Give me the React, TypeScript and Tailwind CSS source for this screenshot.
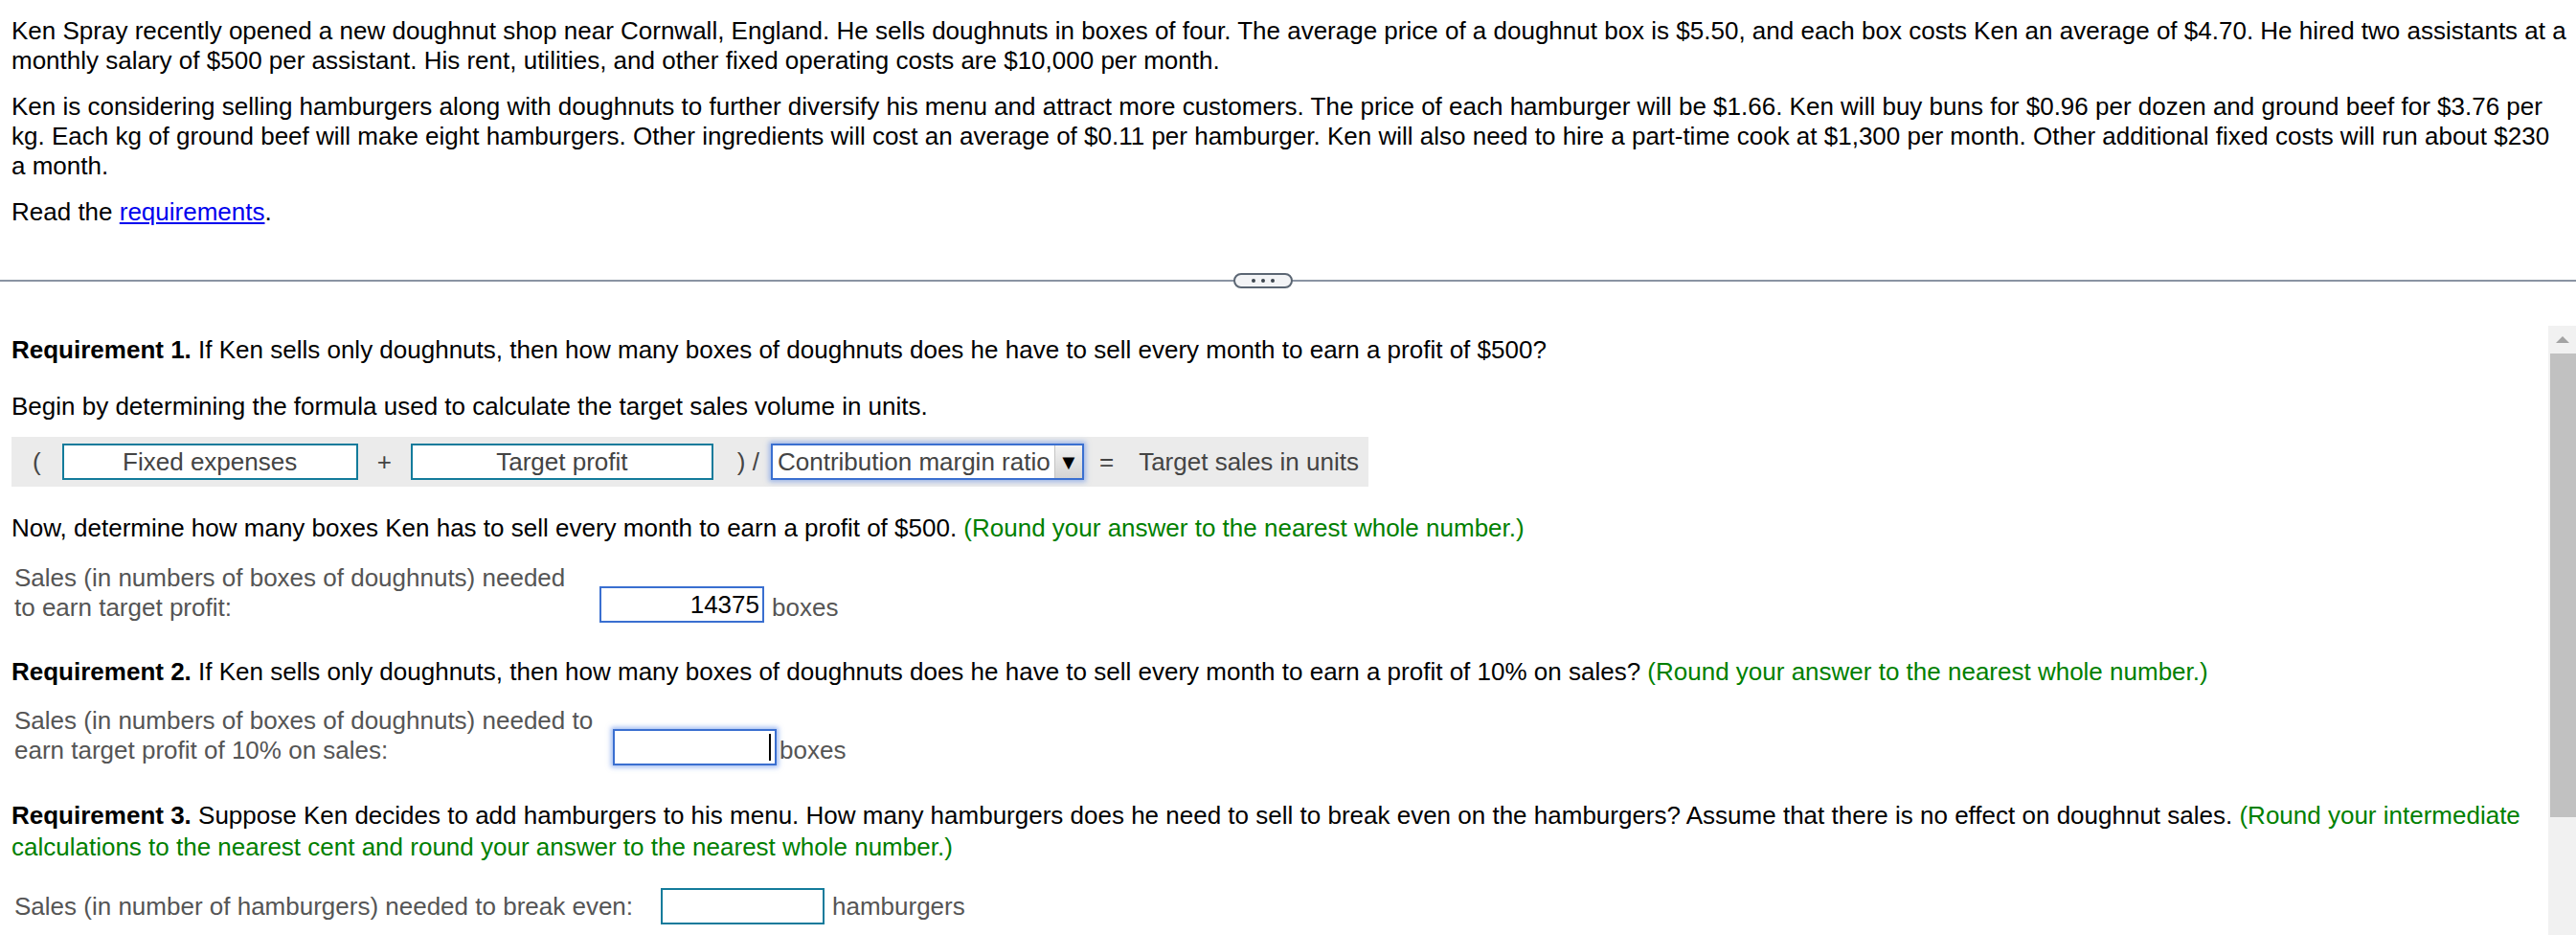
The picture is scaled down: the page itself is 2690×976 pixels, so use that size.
import React from 'react';

const green = 'text-[#008000]';

const Field: React.FC<{ value?: string; variant: 'blue' | 'focus' | 'teal'; width: string }> = ({ value, variant, width }) => {
  const border =
    variant === 'teal'
      ? 'border-2 border-[#137b9b]'
      : variant === 'focus'
        ? 'border-2 border-[#3a6fd0] shadow-[0_0_5px_2px_rgba(80,130,230,0.55)]'
        : 'border-2 border-[#3a6fd0]';
  return (
    <div className={`${width} h-[38px] shrink-0 ${border} bg-white flex items-center justify-end pr-[3px] text-black`}>
      {value}
      {variant === 'focus' && <span className="w-[2px] h-[28px] bg-black mr-[1px]" />}
    </div>
  );
};

const App: React.FC = () => {
  return (
    <div className="w-[2690px] h-[976px] overflow-hidden bg-white text-black text-[26px] leading-[31px] font-['Liberation_Sans',Arial,sans-serif]">
      {/* problem text, broken where the original breaks */}
      <div className="pl-[12px] pt-[17px] whitespace-nowrap">
        <p className="mb-[17px]">
          Ken Spray recently opened a new doughnut shop near Cornwall, England. He sells doughnuts in boxes of four. The average price of a doughnut box is $5.50, and each box costs Ken an average of $4.70. He hired two assistants at a
          <br />
          monthly salary of $500 per assistant. His rent, utilities, and other fixed operating costs are $10,000 per month.
        </p>
        <p className="mb-[17px]">
          Ken is considering selling hamburgers along with doughnuts to further diversify his menu and attract more customers. The price of each hamburger will be $1.66. Ken will buy buns for $0.96 per dozen and ground beef for $3.76 per
          <br />
          kg. Each kg of ground beef will make eight hamburgers. Other ingredients will cost an average of $0.11 per hamburger. Ken will also need to hire a part-time cook at $1,300 per month. Other additional fixed costs will run about $230
          <br />
          a month.
        </p>
        <p>
          Read the <span className="text-[#0000ee] underline">requirements</span>.
        </p>
      </div>

      {/* divider */}
      <div className="relative mt-[48px] h-[16px] flex items-center">
        <div className="w-full h-[2px] bg-[#8a94a3]" />
        <div className="absolute left-[1288px] top-0 w-[62px] h-[16px] rounded-full border-2 border-[#5b6673] bg-[#f3f4f6] flex items-center justify-center gap-[6px]">
          <span className="w-[4px] h-[4px] rounded-full bg-[#3f4750]" />
          <span className="w-[4px] h-[4px] rounded-full bg-[#3f4750]" />
          <span className="w-[4px] h-[4px] rounded-full bg-[#3f4750]" />
        </div>
      </div>

      {/* scroll panel */}
      <div className="mt-[39px] h-[640px] flex">
        <div className="flex-1 pl-[12px] pr-[20px] pt-[10px]">
          <p>
            <b>Requirement 1.</b> If Ken sells only doughnuts, then how many boxes of doughnuts does he have to sell every month to earn a profit of $500?
          </p>
          <p className="mt-[28px]">Begin by determining the formula used to calculate the target sales volume in units.</p>

          <div className="mt-[16px] w-[1417px] h-[52px] bg-[#ebebeb] flex items-center text-[#444] whitespace-nowrap">
            <span className="ml-[22px]">(</span>
            <div className="ml-[22px] w-[309px] h-[38px] shrink-0 border-2 border-[#137b9b] bg-white flex items-center justify-center">Fixed expenses</div>
            <span className="ml-[20px]">+</span>
            <div className="ml-[20px] w-[316px] h-[38px] shrink-0 border-2 border-[#137b9b] bg-white flex items-center justify-center">Target profit</div>
            <span className="ml-[25px]">) /</span>
            <div className="ml-[12px] w-[327px] h-[38px] shrink-0 border-2 border-[#3a6fd0] shadow-[0_0_5px_2px_rgba(80,130,230,0.5)] bg-white flex items-center">
              <span className="flex-1 pl-[5px] overflow-hidden">Contribution margin ratio</span>
              <span className="w-[29px] h-full bg-gradient-to-b from-[#f2f2f2] to-[#d4d4d4] border-l border-[#c4c4c4] flex items-center justify-center text-black text-[22px]">▼</span>
            </div>
            <span className="ml-[16px]">=</span>
            <span className="ml-[26px]">Target sales in units</span>
          </div>

          <p className="mt-[28px]">
            Now, determine how many boxes Ken has to sell every month to earn a profit of $500.{' '}
            <span className={green}>(Round your answer to the nearest whole number.)</span>
          </p>

          <div className="mt-[21px] flex items-end">
            <div className="w-[614px] pl-[3px] text-[#555]">
              Sales (in numbers of boxes of doughnuts) needed
              <br />
              to earn target profit:
            </div>
            <Field value="14375" variant="blue" width="w-[172px]" />
            <span className="ml-[8px] text-[#555]">boxes</span>
          </div>

          <p className="mt-[36px]">
            <b>Requirement 2.</b> If Ken sells only doughnuts, then how many boxes of doughnuts does he have to sell every month to earn a profit of 10% on sales?{' '}
            <span className={green}>(Round your answer to the nearest whole number.)</span>
          </p>

          <div className="mt-[20px] flex items-end">
            <div className="w-[628px] pl-[3px] text-[#555]">
              Sales (in numbers of boxes of doughnuts) needed to
              <br />
              earn target profit of 10% on sales:
            </div>
            <Field variant="focus" width="w-[171px]" />
            <span className="ml-[3px] text-[#555]">boxes</span>
          </div>

          <p className="mt-[36px] leading-[33px]">
            <b>Requirement 3.</b> Suppose Ken decides to add hamburgers to his menu. How many hamburgers does he need to sell to break even on the hamburgers? Assume that there is no effect on doughnut sales.{' '}
            <span className={green}>
              (Round your intermediate calculations to the nearest cent and round your answer to the nearest whole number.)
            </span>
          </p>

          <div className="mt-[26px] flex items-center">
            <div className="w-[678px] pl-[3px] text-[#555]">Sales (in number of hamburgers) needed to break even:</div>
            <Field variant="teal" width="w-[171px]" />
            <span className="ml-[8px] text-[#555]">hamburgers</span>
          </div>
        </div>

        {/* scrollbar */}
        <div className="w-[29px] bg-[#f1f1f1] flex flex-col items-stretch">
          <div className="h-[29px] flex items-center justify-center">
            <div className="w-0 h-0 border-l-[7px] border-r-[7px] border-b-[7px] border-l-transparent border-r-transparent border-b-[#a3a3a3]" />
          </div>
          <div className="ml-[2px] h-[484px] bg-[#c1c1c1]" />
        </div>
      </div>
    </div>
  );
};

export default App;
